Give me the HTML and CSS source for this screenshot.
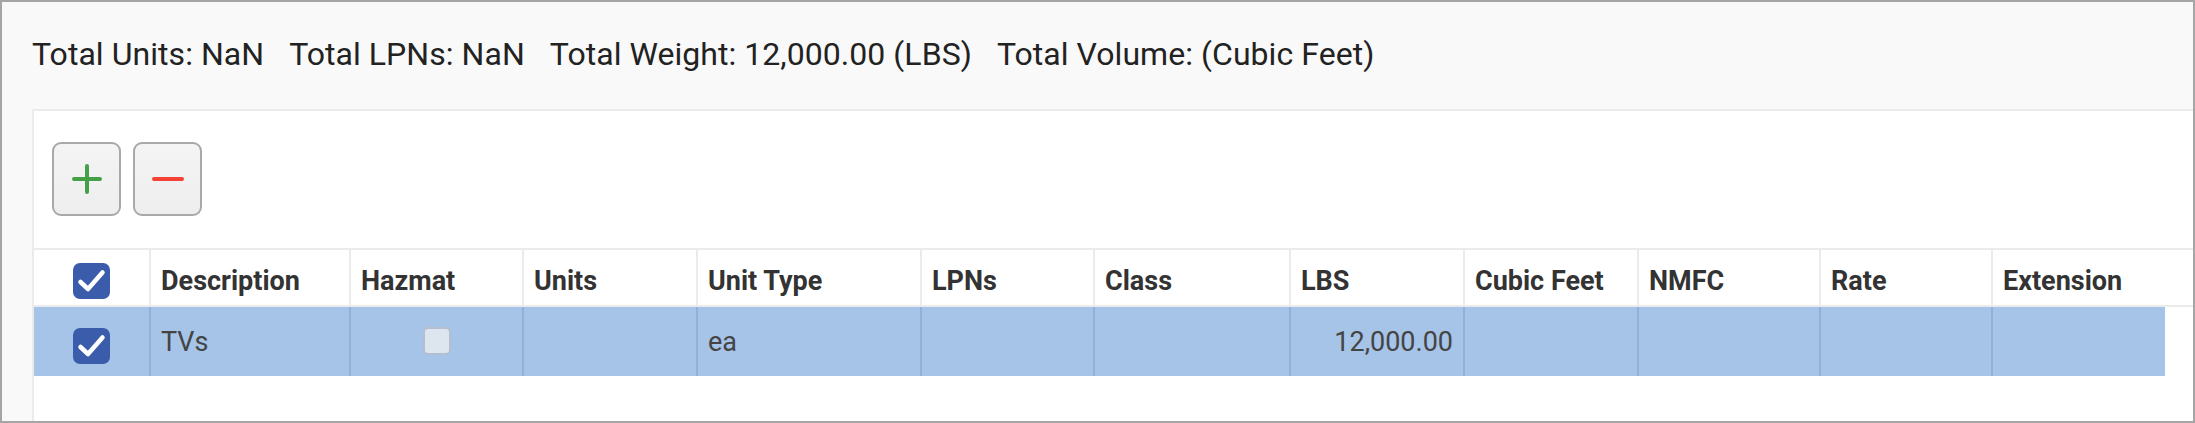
FILE: index.html
```html
<!DOCTYPE html>
<html lang="en">
<head>
    <meta charset="UTF-8">
    <title>Shipment Lines</title>
    <link rel="stylesheet" href="styles.css">
</head>
<body>

<div class="frame">
    <div class="summary">
        <span>Total Units: NaN</span>
        <span>Total LPNs: NaN</span>
        <span>Total Weight: 12,000.00 (LBS)</span>
        <span>Total Volume: (Cubic Feet)</span>
    </div>

    <div class="panel">
        <div class="toolbar">
            <button class="tool-btn" title="Add line">
                <svg width="30" height="30" viewBox="0 0 30 30">
                    <path d="M15 2 V28 M2 15 H28" stroke="#43a047" stroke-width="4" stroke-linecap="round" fill="none"/>
                </svg>
            </button>
            <button class="tool-btn" title="Remove line">
                <svg width="32" height="30" viewBox="0 0 32 30">
                    <path d="M2 15 H30" stroke="#f44336" stroke-width="4" stroke-linecap="round" fill="none"/>
                </svg>
            </button>
        </div>

        <div class="grid-row head">
            <div class="cell check-cell">
                <svg class="check" width="37" height="36" viewBox="0 0 37 36">
                    <rect width="37" height="36" rx="7" fill="#3b5bab"/>
                    <path d="M7.5 19 L15 26 L29.5 9.5" stroke="#fff" stroke-width="4.5" stroke-linecap="round" stroke-linejoin="round" fill="none"/>
                </svg>
            </div>
            <div class="cell">Description</div>
            <div class="cell">Hazmat</div>
            <div class="cell">Units</div>
            <div class="cell">Unit Type</div>
            <div class="cell">LPNs</div>
            <div class="cell">Class</div>
            <div class="cell">LBS</div>
            <div class="cell">Cubic Feet</div>
            <div class="cell">NMFC</div>
            <div class="cell">Rate</div>
            <div class="cell">Extension</div>
            <div class="cell filler"></div>
        </div>

        <div class="grid-row line selected">
            <div class="cell check-cell">
                <svg class="check" width="37" height="36" viewBox="0 0 37 36">
                    <rect width="37" height="36" rx="7" fill="#3b5bab"/>
                    <path d="M7.5 19 L15 26 L29.5 9.5" stroke="#fff" stroke-width="4.5" stroke-linecap="round" stroke-linejoin="round" fill="none"/>
                </svg>
            </div>
            <div class="cell">TVs</div>
            <div class="cell center"><span class="box"></span></div>
            <div class="cell"></div>
            <div class="cell">ea</div>
            <div class="cell"></div>
            <div class="cell"></div>
            <div class="cell num">12,000.00</div>
            <div class="cell"></div>
            <div class="cell"></div>
            <div class="cell"></div>
            <div class="cell"></div>
            <div class="cell filler"></div>
        </div>
    </div>
</div>

</body>
</html>
```

FILE: styles.css
```css
body {
    margin: 0;
    font-family: 'Roboto', 'Liberation Sans', sans-serif;
    background-color: #fff;
}

.frame {
    height: 423px;
    box-sizing: border-box;
    border: 2px solid #a5a5a5;
    background-color: #f9f9f9;
    overflow: hidden;
}

/* строка итогов */
.summary {
    display: flex;
    gap: 25px;
    padding: 32px 0 35px 30px;
    font-size: 32px;
    line-height: 40px;
    letter-spacing: 0.05px;
    color: #222;
    white-space: nowrap;
}

.panel {
    margin-left: 30px;
    height: 100%;
    background-color: #fff;
    border-top: 2px solid #ebebeb;
    border-left: 2px solid #ebebeb;
}

.toolbar {
    display: flex;
    gap: 12px;
    padding: 31px 0 32px 18px;
}

.tool-btn {
    width: 69px;
    height: 74px;
    padding: 0;
    display: flex;
    align-items: center;
    justify-content: center;
    background: linear-gradient(#f4f4f4, #eeeeee);
    border: 2px solid #a9a9a9;
    border-radius: 9px;
    cursor: pointer;
}

.grid-row {
    display: grid;
    grid-template-columns: 115px 200px 173px 174px 224px 173px 196px 174px 174px 182px 172px 174px 1fr;
}

.cell {
    box-sizing: border-box;
    display: flex;
    align-items: center;
    padding: 0 10px;
    border-left: 2px solid #ebebeb;
    white-space: nowrap;
}

.cell:first-child,
.cell.filler {
    border-left: none;
}

.head {
    height: 59px;
    border-top: 2px solid #ebebeb;
    border-bottom: 2px solid #ebebeb;
    box-sizing: border-box;
    font-size: 27px;
    font-weight: bold;
    color: #333;
}

.head .cell {
    padding-top: 7px;
}

.line {
    height: 69px;
    font-size: 27px;
    color: #444;
}

.line .cell {
    border-left-color: #93b0d9;
}

.selected .cell {
    background-color: #a6c3e8;
}

.selected .cell.filler {
    background-color: transparent;
}

.check-cell {
    justify-content: center;
}

.check {
    display: block;
    margin-top: 8px;
}

.head .check {
    margin-top: 0;
}

.cell.center {
    justify-content: center;
}

.cell.num {
    justify-content: flex-end;
}

.box {
    width: 28px;
    height: 28px;
    margin-top: -2px;
    box-sizing: border-box;
    background-color: #dde5ef;
    border: 2px solid #b3bfcf;
    border-radius: 5px;
}
```
